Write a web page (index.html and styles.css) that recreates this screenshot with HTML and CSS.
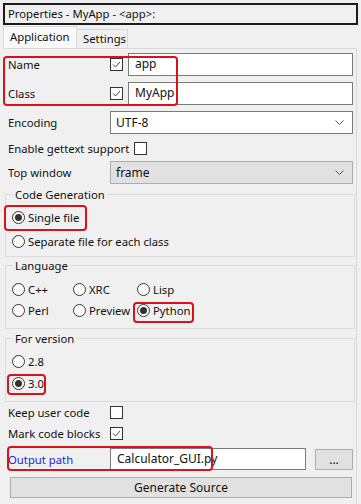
FILE: index.html
```html
<!DOCTYPE html>
<html>
<head>
<meta charset="utf-8">
<link rel="stylesheet" href="styles.css">
</head>
<body>
<div class="title">Properties - MyApp - &lt;app&gt;:</div>
<div class="tabs">
  <div class="tab active">Application</div>
  <div class="tab">Settings</div>
</div>
<div class="panel">
  <div class="annot">
    <div class="row">
      <span class="lbl">Name</span>
      <div class="ctl"><span class="cb"><svg viewBox="0 0 11 11" width="11" height="11"><path d="M2 5.5 L4.5 8 L9 3" fill="none" stroke="#444" stroke-width="1"/></svg></span><div class="input">app</div></div>
    </div>
    <div class="row">
      <span class="lbl">Class</span>
      <div class="ctl"><span class="cb"><svg viewBox="0 0 11 11" width="11" height="11"><path d="M2 5.5 L4.5 8 L9 3" fill="none" stroke="#444" stroke-width="1"/></svg></span><div class="input">MyApp</div></div>
    </div>
    <div class="redbox rb-name"></div>
  </div>
  <div class="row">
    <span class="lbl">Encoding</span>
    <div class="select">UTF-8<svg class="chev" viewBox="0 0 9 5" width="9" height="5"><path d="M0.5 0.5 L4.5 4.5 L8.5 0.5" fill="none" stroke="#555" stroke-width="1"/></svg></div>
  </div>
  <div class="row short">
    <span class="inl">Enable gettext support <span class="cb"></span></span>
  </div>
  <div class="row tw">
    <span class="lbl">Top window</span>
    <div class="select gray">frame<svg class="chev" viewBox="0 0 9 5" width="9" height="5"><path d="M0.5 0.5 L4.5 4.5 L8.5 0.5" fill="none" stroke="#555" stroke-width="1"/></svg></div>
  </div>

  <div class="group g-code">
    <div class="glabel">Code Generation</div>
    <div class="annot">
      <label class="radio first"><span class="rd on"></span>Single file</label>
      <div class="redbox rb-single"></div>
    </div>
    <label class="radio"><span class="rd"></span>Separate file for each class</label>
  </div>

  <div class="group g-lang">
    <div class="glabel">Language</div>
    <div class="lang-grid">
      <label class="radio"><span class="rd"></span>C++</label>
      <label class="radio"><span class="rd"></span>XRC</label>
      <label class="radio"><span class="rd"></span>Lisp</label>
      <label class="radio"><span class="rd"></span>Perl</label>
      <label class="radio"><span class="rd"></span>Preview</label>
      <div class="annot"><label class="radio"><span class="rd on"></span>Python</label><div class="redbox rb-python"></div></div>
    </div>
  </div>

  <div class="group g-ver">
    <div class="glabel">For version</div>
    <label class="radio first"><span class="rd"></span>2.8</label>
    <div class="annot">
      <label class="radio"><span class="rd on"></span>3.0</label>
      <div class="redbox rb-ver"></div>
    </div>
  </div>

  <div class="row crow c1">
    <span class="lbl">Keep user code</span>
    <span class="cb"></span>
  </div>
  <div class="row crow">
    <span class="lbl">Mark code blocks</span>
    <span class="cb"><svg viewBox="0 0 11 11" width="11" height="11"><path d="M2 5.5 L4.5 8 L9 3" fill="none" stroke="#444" stroke-width="1"/></svg></span>
  </div>
  <div class="annot out-wrap">
    <div class="row out">
      <span class="lbl blue">Output path</span>
      <div class="ctl"><div class="input">Calculator_GUI.py</div><div class="btn small">...</div></div>
    </div>
    <div class="redbox rb-out"></div>
  </div>
  <div class="btn gen">Generate Source</div>
</div>
</body>
</html>
```

FILE: styles.css
```css
* { box-sizing: border-box; }
body {
  margin: 0;
  background: #f0f0f0;
  font-family: "Noto Sans", "Open Sans", sans-serif;
  font-size: 11.3px;
  color: #111;
  width: 361px;
  height: 504px;
  overflow: hidden;
}
.title {
  margin: 3px 3px 0 3px;
  height: 22px;
  border: 2px solid #1c1c1c;
  padding-left: 3px;
  line-height: 18px;
  background: #f0f0f0;
}
.tabs {
  display: flex;
  align-items: flex-end;
  margin: 1px 0 0 3px;
  height: 22px;
}
.tab {
  height: 19px;
  width: 51px;
  border: 1px solid #d9d9d9;
  border-bottom: none;
  border-left: none;
  padding-left: 6px;
  line-height: 17px;
}
.tab.active {
  height: 22px;
  width: 74px;
  background: #f9f9f9;
  border-left: 1px solid #d9d9d9;
  padding-left: 6px;
  line-height: 20px;
}
.panel {
  margin: 0 4px 0 3px;
  border-top: 1px solid #d9d9d9;
  border-right: 1px solid #d9d9d9;
  padding: 4px 1px 0 2px;
  height: 456px;
}
.annot { position: relative; }
.redbox {
  position: absolute;
  border: 2px solid #d8121c;
  border-radius: 4px;
  pointer-events: none;
}
.rb-name { left: -2px; top: 3px; width: 175px; height: 50px; }
.rb-single { left: -8px; top: 0; width: 83px; height: 26px; }
.rb-python { left: -4px; top: 2px; width: 61px; height: 21px; }
.rb-ver { left: -5px; top: 2px; width: 39px; height: 21px; }
.rb-out { left: 2px; top: -2px; width: 206px; height: 25px; }

.row {
  display: grid;
  grid-template-columns: 102px 1fr;
  align-items: center;
  height: 23px;
  margin-top: 6px;
  padding: 0 2px 0 3px;
}
.annot:first-child .row:first-child { margin-top: 0; }
.row.short { display: flex; height: 20px; margin-top: 4px; }
.row.tw { margin-top: 3px; }
.inl { display: inline-flex; align-items: center; gap: 5px; }
.ctl { display: flex; align-items: center; gap: 5px; }
.cb {
  width: 13px;
  height: 13px;
  border: 1px solid #333;
  background: #fff;
  display: inline-flex;
  align-items: center;
  justify-content: center;
  flex: none;
}
.cb svg { display: block; }
.input {
  flex: 1;
  height: 23px;
  border: 1px solid #7a7a7a;
  background: #fff;
  padding-left: 6px;
  line-height: 20px;
  font-size: 12px;
}
.select {
  height: 23px;
  border: 1px solid #7a7a7a;
  background: #fff;
  padding: 0 8px 0 5px;
  display: flex;
  align-items: center;
  justify-content: space-between;
  font-size: 12px;
}
.select.gray { background: #e1e1e1; border-color: #adadad; }
.chev { display: block; }

.group {
  border: 1px solid #dcdcdc;
  padding: 0 0 0 6px;
}
.glabel {
  margin: -9px 0 0 1px;
  height: 18px;
  line-height: 18px;
  padding: 0 2px;
  background: #f0f0f0;
  display: table;
}
.g-code { margin-top: 10px; padding-bottom: 3px; }
.g-code .radio { height: 24px; }
.g-code .first { margin-top: 1px; }
.g-lang { margin-top: 8px; padding-bottom: 7px; }
.g-ver { margin-top: 9px; padding-bottom: 7px; }
.g-ver .first { margin-top: 2px; }

.radio {
  display: flex;
  align-items: center;
  gap: 3px;
  height: 22px;
  white-space: nowrap;
}
.rd {
  width: 13px;
  height: 13px;
  border: 1px solid #333;
  border-radius: 50%;
  background: #fff;
  display: inline-flex;
  align-items: center;
  justify-content: center;
  flex: none;
}
.rd.on::after {
  content: "";
  width: 7px;
  height: 7px;
  border-radius: 50%;
  background: #333;
}
.lang-grid {
  display: grid;
  grid-template-columns: 61px 64px 1fr;
  margin-top: 4px;
}
.lang-grid .radio { height: 21px; }

.crow { height: 20px; margin-top: 1px; }
.crow.c1 { margin-top: 0; }
.out { margin-top: 5px; height: 21px; }
.out .input { height: 22px; flex: none; width: 196px; }
.out .ctl { gap: 9px; }
.blue { color: #1f1fd2; }
.btn {
  background: #e1e1e1;
  border: 1px solid #adadad;
  display: flex;
  align-items: center;
  justify-content: center;
  font-size: 12px;
}
.btn.small { width: 38px; height: 21px; }
.gen { margin: 8px 3px 0 5px; height: 21px; }
```
